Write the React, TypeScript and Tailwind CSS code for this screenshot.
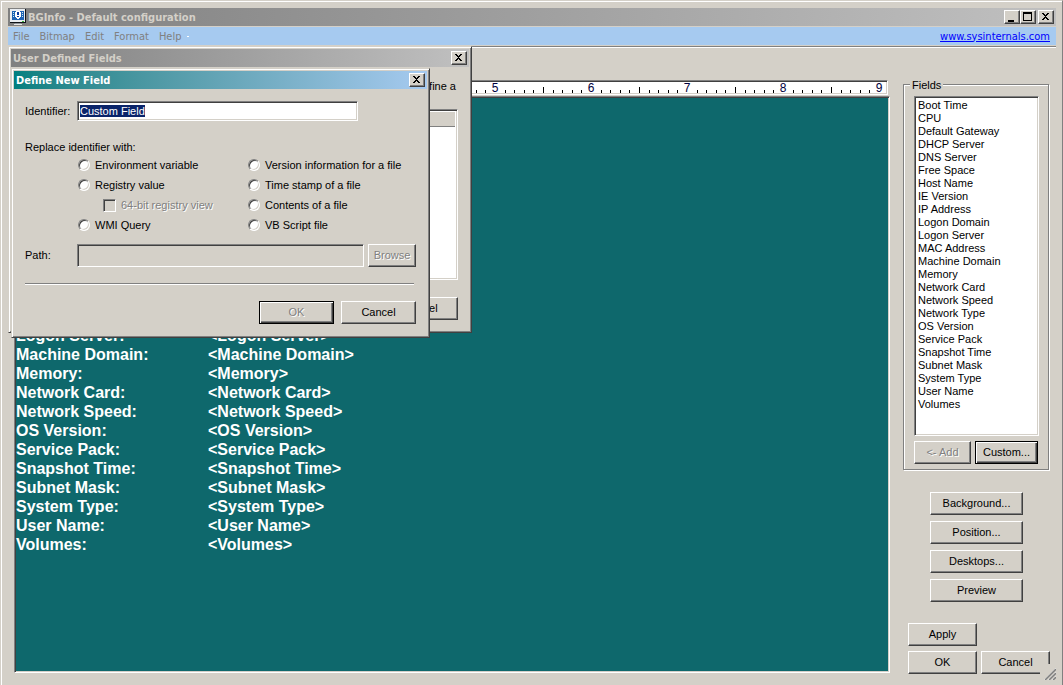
import { useEffect, useRef, useState } from "react";
import type { ReactNode } from "react";

const FIELDS = [
  "Boot Time",
  "CPU",
  "Default Gateway",
  "DHCP Server",
  "DNS Server",
  "Free Space",
  "Host Name",
  "IE Version",
  "IP Address",
  "Logon Domain",
  "Logon Server",
  "MAC Address",
  "Machine Domain",
  "Memory",
  "Network Card",
  "Network Speed",
  "Network Type",
  "OS Version",
  "Service Pack",
  "Snapshot Time",
  "Subnet Mask",
  "System Type",
  "User Name",
  "Volumes",
];

const SKIPPED = ["MAC Address", "Network Type"];
const LAYOUT_FIELDS = FIELDS.filter((f) => !SKIPPED.includes(f));

const MENUS = ["File", "Bitmap", "Edit", "Format", "Help"];

const SOURCES = [
  ["Environment variable", "Version information for a file"],
  ["Registry value", "Time stamp of a file"],
  ["64-bit registry view", "Contents of a file"],
  ["WMI Query", "VB Script file"],
];

const sunken =
  "border border-t-[#808080] border-l-[#808080] border-r-white border-b-white shadow-[inset_1px_1px_0_#404040,inset_-1px_-1px_0_#d4d0c8]";
const raised =
  "border border-t-white border-l-white border-r-[#404040] border-b-[#404040] shadow-[inset_-1px_-1px_0_#808080]";
const raisedDefault =
  "border border-black shadow-[inset_1px_1px_0_#fff,inset_-1px_-1px_0_#404040,inset_-2px_-2px_0_#808080]";
const frame =
  "border border-t-[#d4d0c8] border-l-[#d4d0c8] border-r-[#404040] border-b-[#404040] bg-[#d4d0c8] p-[2px] shadow-[inset_1px_1px_0_#fff,inset_-1px_-1px_0_#808080]";
const disabledText = "text-[#808080] [text-shadow:1px_1px_0_#fff]";
const captionFont = "font-['DejaVu_Sans_Condensed','DejaVu_Sans',sans-serif]";

type ButtonProps = {
  children: ReactNode;
  className?: string;
  isDefault?: boolean;
  disabled?: boolean;
};

function Button({ children, className = "", isDefault, disabled }: ButtonProps) {
  return (
    <button
      type="button"
      disabled={disabled}
      className={`h-[23px] bg-[#d4d0c8] text-center ${isDefault ? raisedDefault : raised} ${
        disabled ? disabledText : ""
      } ${className}`}
    >
      {children}
    </button>
  );
}

const GLYPHS = {
  Minimize: "M3 9h6v2H3z",
  Maximize: "M2 1h9v9H2zM3 3v6h7V3z",
  Close: "M3 2h2v1h1v1h1v-1h1v-1h2v1h-1v1h-1v1h-1v1h1v1h1v1h1v1h-2v-1h-1v-1h-1v1h-1v1h-2v-1h1v-1h1v-1h1v-1h-1v-1h-1v-1h-1z",
};

function CaptionButton({ kind }: { kind: keyof typeof GLYPHS }) {
  return (
    <button
      type="button"
      aria-label={kind}
      className={`flex h-[14px] w-4 items-center justify-center bg-[#d4d0c8] ${raised}`}
    >
      <svg width="14" height="12" viewBox="0 0 14 12" shapeRendering="crispEdges">
        <path d={GLYPHS[kind]} fillRule="evenodd" fill="#000" />
      </svg>
    </button>
  );
}

function AppIcon() {
  return (
    <svg width="16" height="18" viewBox="0 0 16 18" shapeRendering="crispEdges" className="ml-[2px]">
      <path d="M0 1h16v14H0z" fill="#101418" />
      <path d="M0 1h15v13H0z" fill="#e8ecf0" />
      <path d="M2 3h12v9H2z" fill="#1c62b4" />
      <path d="M3 4h1v1H3zM3 6h1v1H3zM3 8h1v1H3zM12 4h1v1h-1zM12 6h1v1h-1zM12 8h1v1h-1z" fill="#c8ecf0" />
      <path d="M6 3h4v1h1v5h-1v1H9v1H7v-1H6V9H5V4h1z" fill="#fff" />
      <path d="M7 4h2v3H7zM7 8h2v1H7z" fill="#0a3ca0" />
      <path d="M12 13h2v1h-2z" fill="#38b838" />
      <path d="M5 15h6v1H5z" fill="#909498" />
      <path d="M4 16h8v1H4z" fill="#e4e4e4" />
    </svg>
  );
}

function Ruler() {
  const ticks = Array.from({ length: 89 }, (_, i) => i + 1);
  return (
    <div className={`mr-[2px] h-[15px] bg-white p-px ${sunken}`}>
      <svg className="block h-[11px] w-full overflow-hidden" shapeRendering="crispEdges">
        {ticks
          .filter((i) => i % 10 !== 0)
          .map((i) => (
            <rect
              key={i}
              x={Math.round(i * 9.6) - 1}
              y={i % 5 === 0 ? 5 : 8}
              width="1"
              height={i % 5 === 0 ? 6 : 3}
              fill="#000"
            />
          ))}
        {[1, 2, 3, 4, 5, 6, 7, 8, 9].map((n) => (
          <text key={n} x={n * 96 - 1} y="10" textAnchor="middle" fontSize="12" fill="#000040">
            {n}
          </text>
        ))}
      </svg>
    </div>
  );
}

function SourceRadio({ label, checked, onSelect }: { label: string; checked: boolean; onSelect: () => void }) {
  return (
    <label className="flex h-5 items-center gap-[5px]">
      <input
        type="radio"
        name="source"
        checked={checked}
        onChange={onSelect}
        className="size-3 appearance-none rounded-full border border-t-[#808080] border-l-[#808080] border-r-white border-b-white bg-white shadow-[inset_1px_1px_0_#404040,inset_-1px_-1px_0_#d4d0c8] checked:bg-black"
      />
      {label}
    </label>
  );
}

function UserDefinedFieldsDialog() {
  return (
    <section className={`absolute top-[45px] left-[7px] w-[464px] ${frame}`}>
      <header className={`flex h-[18px] items-center bg-linear-to-r from-[#808080] to-[#c0c0c0] px-[2px] font-bold text-[#d4d0c8] ${captionFont}`}>
        <h2 className="flex-1">User Defined Fields</h2>
        <CaptionButton kind="Close" />
      </header>
      <div className="px-[11px] pt-[13px] pb-[10px]">
        <p className="pr-[2px] text-right">Select New to define a</p>
        <div className={`mt-4 h-[171px] bg-white p-[2px] ${sunken}`}>
          <div className="h-[15px] border-b border-[#808080] bg-[#d4d0c8]" />
        </div>
        <div className="mt-[17px] flex justify-end">
          <Button className="w-[75px]">Cancel</Button>
        </div>
      </div>
    </section>
  );
}

function DefineFieldDialog() {
  const [identifier, setIdentifier] = useState("Custom Field");
  const [source, setSource] = useState<string | null>(null);
  const inputRef = useRef<HTMLInputElement>(null);

  useEffect(() => {
    inputRef.current?.focus();
    inputRef.current?.select();
  }, []);

  return (
    <section className={`absolute top-[67px] left-[10px] w-[419px] ${frame}`}>
      <header className={`flex h-[18px] items-center bg-linear-to-r from-[#008080] to-[#a6caf0] px-[2px] font-bold text-white ${captionFont}`}>
        <h2 className="flex-1">Define New Field</h2>
        <CaptionButton kind="Close" />
      </header>
      <form className="px-[11px] pt-3 pb-[11px]">
        <div className="flex items-center">
          <label htmlFor="identifier" className="w-[52px]">
            Identifier:
          </label>
          <input
            id="identifier"
            ref={inputRef}
            type="text"
            value={identifier}
            onChange={(e) => setIdentifier(e.target.value)}
            className={`h-5 w-[281px] bg-white px-[2px] outline-none selection:bg-[#0a246a] selection:text-white ${sunken}`}
          />
        </div>
        <p className="mt-5">Replace identifier with:</p>
        <div className="ml-[53px] grid grid-cols-[170px_1fr] pt-px">
          {SOURCES.flat().map((label) =>
            label.startsWith("64-bit") ? (
              <label key={label} className={`ml-[25px] flex h-5 items-center gap-[5px] ${disabledText}`}>
                <input type="checkbox" disabled className={`size-[13px] appearance-none bg-[#d4d0c8] ${sunken}`} />
                {label}
              </label>
            ) : (
              <SourceRadio
                key={label}
                label={label}
                checked={source === label}
                onSelect={() => setSource(label)}
              />
            )
          )}
        </div>
        <div className="mt-[9px] flex items-center">
          <label htmlFor="path" className="w-[52px]">
            Path:
          </label>
          <input id="path" type="text" disabled className={`h-[23px] min-w-0 flex-1 bg-[#d4d0c8] px-[2px] ${sunken}`} />
          <Button disabled className="ml-1 w-12">
            Browse
          </Button>
        </div>
        <hr className="mt-4 mr-[2px] h-[2px] border-t border-[#808080] bg-white" />
        <div className="mt-4 flex justify-end gap-[7px]">
          <Button disabled isDefault className="w-[75px]">
            OK
          </Button>
          <Button className="w-[75px]">Cancel</Button>
        </div>
      </form>
    </section>
  );
}

export default function App() {
  return (
    <div className="relative flex min-h-screen flex-col border-t border-l border-r border-t-[#d4d0c8] border-l-[#d4d0c8] border-r-[#808080] bg-[#d4d0c8] px-[6px] pt-[7px] pl-[7px] font-['Liberation_Sans',Arial,sans-serif] text-[11px] leading-[13px] text-black shadow-[inset_1px_1px_0_#fff]">
      <header className={`flex h-[18px] items-center bg-linear-to-r from-[#808080] to-[#c0c0c0] pr-[2px] font-bold text-[#d4d0c8] ${captionFont}`}>
        <AppIcon />
        <h1 className="ml-[2px] flex-1">BGInfo - Default configuration</h1>
        <CaptionButton kind="Minimize" />
        <CaptionButton kind="Maximize" />
        <div className="ml-[2px] flex">
          <CaptionButton kind="Close" />
        </div>
      </header>
      <nav className={`mt-px flex h-[18px] items-center gap-[10px] bg-[#a6caf0] pr-[6px] pl-[5px] text-[#808080] ${captionFont}`}>
        {MENUS.map((menu) => (
          <button key={menu} type="button">
            {menu}
          </button>
        ))}
        <span className="-ml-1 h-px w-[2px] bg-white" />
        <a href="https://www.sysinternals.com" className="ml-auto text-[#0000ff] underline">
          www.sysinternals.com
        </a>
      </nav>
      <div className="mt-px h-[2px] border-t border-[#808080] bg-white" />

      <main className="flex flex-1 gap-[13px] pt-8 pr-[6px] pb-[11px] pl-[6px]">
        <div className="flex min-w-0 flex-1 flex-col pb-px">
          <Ruler />
          <div className={`mt-px flex-1 bg-[#0e686c] px-px pt-[39px] ${sunken}`}>
            <table className="text-left text-[16px] leading-[19px] font-bold text-white">
              <tbody>
                {LAYOUT_FIELDS.map((field) => (
                  <tr key={field}>
                    <th scope="row" className="w-48 p-0">
                      {field}:
                    </th>
                    <td className="p-0">{`<${field}>`}</td>
                  </tr>
                ))}
              </tbody>
            </table>
          </div>
        </div>

        <aside className="flex w-[147px] flex-col pt-1">
          <div className="relative mr-px border border-[#808080] pt-[11px] pr-[9px] pb-[5px] pl-[10px] shadow-[inset_1px_1px_0_#fff,1px_1px_0_#fff]">
            <h2 id="fields-label" className="absolute -top-[6px] left-[6px] bg-[#d4d0c8] px-[2px]">
              Fields
            </h2>
            <ul aria-labelledby="fields-label" className={`h-[340px] bg-white px-[3px] pt-[2px] ${sunken}`}>
              {FIELDS.map((field) => (
                <li key={field}>{field}</li>
              ))}
            </ul>
            <div className="mt-[5px] flex gap-1">
              <Button disabled className="w-[57px]">
                &lt;- Add
              </Button>
              <Button isDefault className="w-[63px]">
                Custom...
              </Button>
            </div>
          </div>
          <div className="mt-[22px] ml-[27px] flex w-[93px] flex-col gap-[6px]">
            <Button>Background...</Button>
            <Button>Position...</Button>
            <Button>Desktops...</Button>
            <Button>Preview</Button>
          </div>
          <div className="mt-auto ml-[5px] grid grid-cols-[69px_69px] gap-x-1 gap-y-[5px]">
            <Button>Apply</Button>
            <Button className="col-start-1">OK</Button>
            <Button>Cancel</Button>
          </div>
        </aside>
      </main>

      <svg width="16" height="16" viewBox="0 0 16 16" className="absolute right-[6px] bottom-[5px] bg-[#d4d0c8]">
        <path d="M4 16L16 4M8 16L16 8M12 16L16 12" stroke="#fff" strokeWidth="1" />
        <path d="M5 16L16 5M9 16L16 9M13 16L16 13" stroke="#808080" strokeWidth="1.6" />
      </svg>

      <UserDefinedFieldsDialog />
      <DefineFieldDialog />
    </div>
  );
}
